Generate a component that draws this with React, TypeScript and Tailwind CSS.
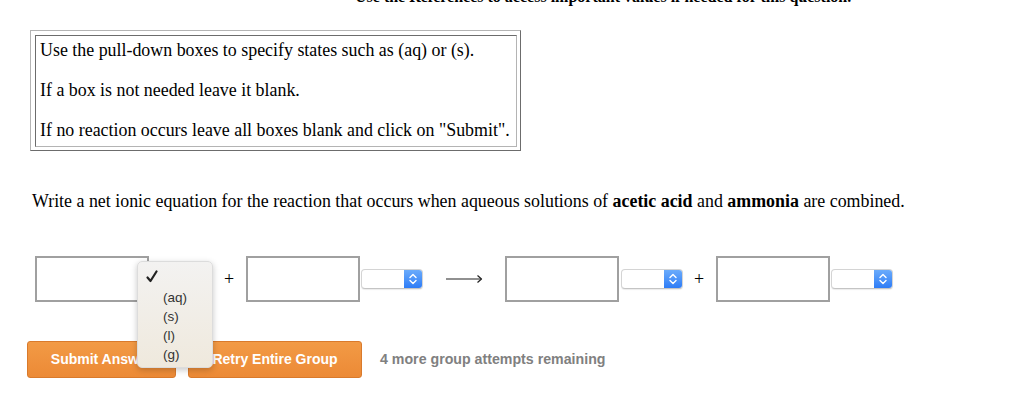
import React from "react";

function StateSelect({ className = "" }: { className?: string }) {
  return (
    <div
      className={`flex h-[20px] w-[62px] overflow-hidden rounded-[4px] border border-[#d4d4d4] border-b-[#c4c4c4] bg-white shadow-[0_1px_1px_rgba(0,0,0,0.08)] ${className}`}
    >
      <div className="flex-1" />
      <div className="flex w-[18px] items-center justify-center bg-gradient-to-b from-[#6aabfb] to-[#2d7cf6]">
        <svg width="8" height="12" viewBox="0 0 8 12" fill="none">
          <path d="M1 4.5 L4 1.5 L7 4.5" stroke="white" strokeWidth="1.4" strokeLinecap="round" strokeLinejoin="round" />
          <path d="M1 7.5 L4 10.5 L7 7.5" stroke="white" strokeWidth="1.4" strokeLinecap="round" strokeLinejoin="round" />
        </svg>
      </div>
    </div>
  );
}

function AnswerBox({ className = "" }: { className?: string }) {
  return <div className={`h-[46px] w-[114px] border-2 border-[#a0a0a0] bg-white ${className}`} />;
}

function Plus({ className = "" }: { className?: string }) {
  return <span className={`w-[10px] text-center text-[18px] leading-none ${className}`}>+</span>;
}

export default function App() {
  const serif = { fontFamily: '"Liberation Serif", "Times New Roman", serif' };
  const sans = { fontFamily: '"Liberation Sans", Arial, Helvetica, sans-serif' };

  return (
    <div className="relative h-[420px] w-[1024px] overflow-hidden bg-white text-black" style={serif}>
      <p className="mt-[-12px] pl-[355px] text-[16px] font-bold leading-[18px]">
        Use the References to access important values if needed for this question.
      </p>

      <div className="ml-[30px] mt-[24px] w-[491px] border border-t-[#b4b4b4] border-l-[#b4b4b4] border-b-[#6c6c6c] border-r-[#6c6c6c] p-[4px] pr-[3px] pb-[3px]">
        <div className="flex flex-col gap-[16px] border border-t-[#6c6c6c] border-l-[#6c6c6c] border-b-[#b4b4b4] border-r-[#b4b4b4] pb-[4px] pl-[4px] pt-[2px] text-[17.9px] leading-[24px]">
          <p>Use the pull-down boxes to specify states such as (aq) or (s).</p>
          <p>If a box is not needed leave it blank.</p>
          <p>If no reaction occurs leave all boxes blank and click on "Submit".</p>
        </div>
      </div>

      <p className="ml-[32px] mt-[38px] text-[17.9px] leading-[24px]">
        Write a net ionic equation for the reaction that occurs when aqueous solutions of{" "}
        <b>acetic acid</b> and <b>ammonia</b> are combined.
      </p>

      <div className="ml-[35px] mt-[43px] flex items-center">
        <AnswerBox />
        <StateSelect className="ml-[1px]" />
        <Plus className="ml-[12px]" />
        <AnswerBox className="ml-[12px]" />
        <StateSelect className="ml-[1px]" />
        <svg className="ml-[23px]" width="37" height="10" viewBox="0 0 37 10" fill="none">
          <path d="M0 5 H35" stroke="#222" strokeWidth="1.2" />
          <path d="M31.5 1.5 L35.5 5 L31.5 8.5" stroke="#222" strokeWidth="1.2" strokeLinejoin="round" />
        </svg>
        <AnswerBox className="ml-[22px]" />
        <StateSelect className="ml-[2px]" />
        <Plus className="ml-[11px]" />
        <AnswerBox className="ml-[12px]" />
        <StateSelect className="ml-[1px]" />
      </div>

      <div className="ml-[27px] mt-[39px] flex items-center" style={sans}>
        <button className="h-[37px] w-[149px] rounded-[3px] border border-[#d97a2c] bg-gradient-to-b from-[#f29a45] to-[#ec8a36] text-[14px] font-bold text-white">
          Submit Answer
        </button>
        <button className="ml-[12px] h-[37px] w-[174px] rounded-[3px] border border-[#d97a2c] bg-gradient-to-b from-[#f29a45] to-[#ec8a36] text-[14px] font-bold text-white">
          Retry Entire Group
        </button>
        <span className="ml-[18px] text-[14.2px] font-bold text-[#808080]">4 more group attempts remaining</span>
      </div>

      <div
        className="absolute left-[137px] top-[261px] h-[107px] w-[76px] rounded-[5px] border border-[#dcdcdc] bg-gradient-to-b from-[#f3f2f1] to-[#efe9dd] shadow-[0_2px_6px_rgba(0,0,0,0.22)]"
        style={sans}
      >
        <svg className="absolute left-[8px] top-[8px]" width="12" height="13" viewBox="0 0 12 13" fill="none">
          <path d="M1.5 7.5 L4.5 11 L10.5 1.5" stroke="#222" strokeWidth="2.2" strokeLinecap="round" strokeLinejoin="round" />
        </svg>
        <div className="absolute left-[25px] top-[26px] flex flex-col text-[13.5px] leading-[19px] text-[#333]">
          <span>(aq)</span>
          <span>(s)</span>
          <span>(l)</span>
          <span>(g)</span>
        </div>
      </div>
    </div>
  );
}
